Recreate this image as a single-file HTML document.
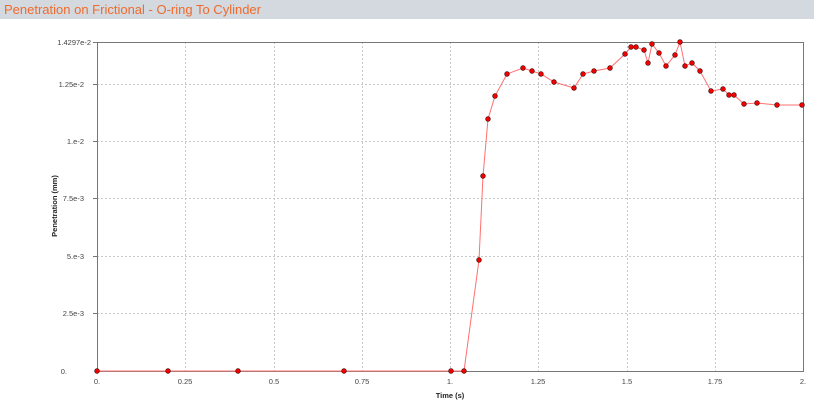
<!DOCTYPE html>
<html><head><meta charset="utf-8"><style>
html,body{margin:0;padding:0;background:#fff;width:814px;height:406px;overflow:hidden;font-family:"Liberation Sans",sans-serif}
.t{position:absolute;left:0;top:0;width:814px;height:19px;background:#d3d9de;color:#f06a2c;font-size:13px;line-height:19px;padding-left:4px;box-sizing:border-box}
svg{position:absolute;left:0;top:0}
text{font-family:"Liberation Sans",sans-serif;font-size:7.5px;fill:#444}
</style></head><body>
<div class="t">Penetration on Frictional - O-ring To Cylinder</div>
<svg width="814" height="406">
<g stroke="#c8c8c8" stroke-dasharray="2,2" stroke-width="1">
<line x1="185.5" y1="42" x2="185.5" y2="371"/><line x1="274.5" y1="42" x2="274.5" y2="371"/><line x1="362.5" y1="42" x2="362.5" y2="371"/><line x1="450.5" y1="42" x2="450.5" y2="371"/><line x1="538.5" y1="42" x2="538.5" y2="371"/><line x1="627.5" y1="42" x2="627.5" y2="371"/><line x1="715.5" y1="42" x2="715.5" y2="371"/>
<line x1="97" y1="313.5" x2="803" y2="313.5"/><line x1="97" y1="256.5" x2="803" y2="256.5"/><line x1="97" y1="198.5" x2="803" y2="198.5"/><line x1="97" y1="141.5" x2="803" y2="141.5"/><line x1="97" y1="84.5" x2="803" y2="84.5"/>
</g>
<rect x="97.5" y="42.5" width="706" height="329" fill="none" stroke="#777" stroke-width="1"/>
<g stroke="#777"><line x1="93" y1="42.5" x2="97" y2="42.5"/><line x1="93" y1="84.5" x2="97" y2="84.5"/><line x1="93" y1="141.5" x2="97" y2="141.5"/><line x1="93" y1="198.5" x2="97" y2="198.5"/><line x1="93" y1="256.5" x2="97" y2="256.5"/><line x1="93" y1="313.5" x2="97" y2="313.5"/></g>
<polyline fill="none" stroke="#ff7070" stroke-width="1" points="97,371 168,371 238,371 344,371 451,371 464,371 479,260 483,176 488,119 495,96 507,74 523,68 532,71 541,74 554,82 574,88 583,74 594,71 610,68 625,54 631,47 636,47 644,50 648,63 652,44 659,53 666,66 675,55 680,42 685,66 692,63 700,71 711,91 723,89 729,95 734,95 744,104 757,103 777,105 802,105"/>
<g fill="#f00000" stroke="#401010" stroke-width="0.6">
<circle cx="97" cy="371" r="2.4"/><circle cx="168" cy="371" r="2.4"/><circle cx="238" cy="371" r="2.4"/><circle cx="344" cy="371" r="2.4"/><circle cx="451" cy="371" r="2.4"/><circle cx="464" cy="371" r="2.4"/><circle cx="479" cy="260" r="2.4"/><circle cx="483" cy="176" r="2.4"/><circle cx="488" cy="119" r="2.4"/><circle cx="495" cy="96" r="2.4"/><circle cx="507" cy="74" r="2.4"/><circle cx="523" cy="68" r="2.4"/><circle cx="532" cy="71" r="2.4"/><circle cx="541" cy="74" r="2.4"/><circle cx="554" cy="82" r="2.4"/><circle cx="574" cy="88" r="2.4"/><circle cx="583" cy="74" r="2.4"/><circle cx="594" cy="71" r="2.4"/><circle cx="610" cy="68" r="2.4"/><circle cx="625" cy="54" r="2.4"/><circle cx="631" cy="47" r="2.4"/><circle cx="636" cy="47" r="2.4"/><circle cx="644" cy="50" r="2.4"/><circle cx="648" cy="63" r="2.4"/><circle cx="652" cy="44" r="2.4"/><circle cx="659" cy="53" r="2.4"/><circle cx="666" cy="66" r="2.4"/><circle cx="675" cy="55" r="2.4"/><circle cx="680" cy="42" r="2.4"/><circle cx="685" cy="66" r="2.4"/><circle cx="692" cy="63" r="2.4"/><circle cx="700" cy="71" r="2.4"/><circle cx="711" cy="91" r="2.4"/><circle cx="723" cy="89" r="2.4"/><circle cx="729" cy="95" r="2.4"/><circle cx="734" cy="95" r="2.4"/><circle cx="744" cy="104" r="2.4"/><circle cx="757" cy="103" r="2.4"/><circle cx="777" cy="105" r="2.4"/><circle cx="802" cy="105" r="2.4"/>
</g>
<g text-anchor="end">
<text x="91" y="45">1.4297e-2</text><text x="84" y="87">1.25e-2</text><text x="84" y="144">1.e-2</text><text x="84" y="201">7.5e-3</text><text x="84" y="259">5.e-3</text><text x="84" y="316">2.5e-3</text><text x="67" y="374">0.</text>
</g>
<g text-anchor="middle">
<text x="97" y="384">0.</text><text x="185" y="384">0.25</text><text x="274" y="384">0.5</text><text x="362" y="384">0.75</text><text x="450" y="384">1.</text><text x="538" y="384">1.25</text><text x="627" y="384">1.5</text><text x="715" y="384">1.75</text><text x="803" y="384">2.</text>
</g>
<text x="450" y="398" text-anchor="middle" style="font-weight:bold;fill:#222">Time (s)</text>
<text transform="translate(57,206) rotate(-90)" text-anchor="middle" style="font-weight:bold;fill:#222">Penetration (mm)</text>
</svg>
</body></html>
